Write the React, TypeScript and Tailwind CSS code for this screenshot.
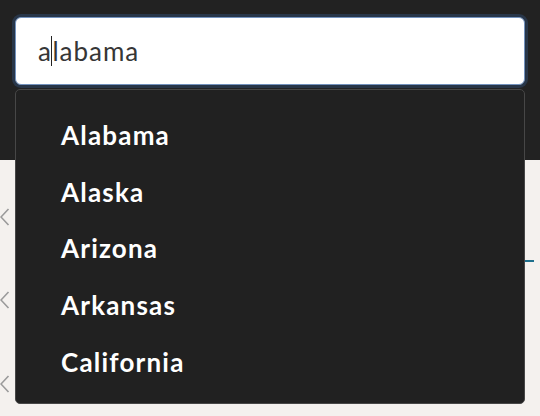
const states = ['Alabama', 'Alaska', 'Arizona', 'Arkansas', 'California'];

export default function App() {
  return (
    <div className="relative w-[540px] h-[416px] overflow-hidden bg-[#f4f1ee] font-['Lato',sans-serif]">
      {/* Header with search field */}
      <div className="h-[160px] bg-[#222222] px-[15px] pt-[17px]">
        <div className="w-[510px] h-[68px] flex items-center rounded-[6px] border-[1.5px] border-[#7392bd] bg-white pl-[22px] text-[26px] tracking-[1px] text-[#363636] shadow-[0_0_0_3px_#283649]">
          <span>a</span>
          <span className="w-[1.5px] h-[30px] -ml-[1px] bg-[#222]" />
          <span>labama</span>
        </div>
      </div>

      {/* Page content peeking out behind the menu */}
      <svg className="absolute left-0 top-[208px]" width="10" height="190" viewBox="0 0 10 190">
        <path d="M8.5 1 L1 9 L8.5 17" stroke="#9a9a9a" strokeWidth="1.6" fill="none" />
        <path d="M8.5 84 L1 92 L8.5 100" stroke="#9a9a9a" strokeWidth="1.6" fill="none" />
        <path d="M8.5 168 L1 176 L8.5 184" stroke="#9a9a9a" strokeWidth="1.6" fill="none" />
      </svg>
      <div className="absolute left-[525px] top-[260px] w-[9px] h-[2px] bg-[#1e6f8c]" />

      {/* Suggestions menu */}
      <ul className="absolute left-[15px] top-[89px] w-[510px] h-[315px] rounded-[5px] border-[1.5px] border-[#474747] bg-[#212121] pt-[17px]">
        {states.map((s) => (
          <li
            key={s}
            className="h-[56.75px] flex items-center pl-[45px] text-[26px] tracking-[1.2px] font-bold text-white"
          >
            {s}
          </li>
        ))}
      </ul>
    </div>
  );
}
